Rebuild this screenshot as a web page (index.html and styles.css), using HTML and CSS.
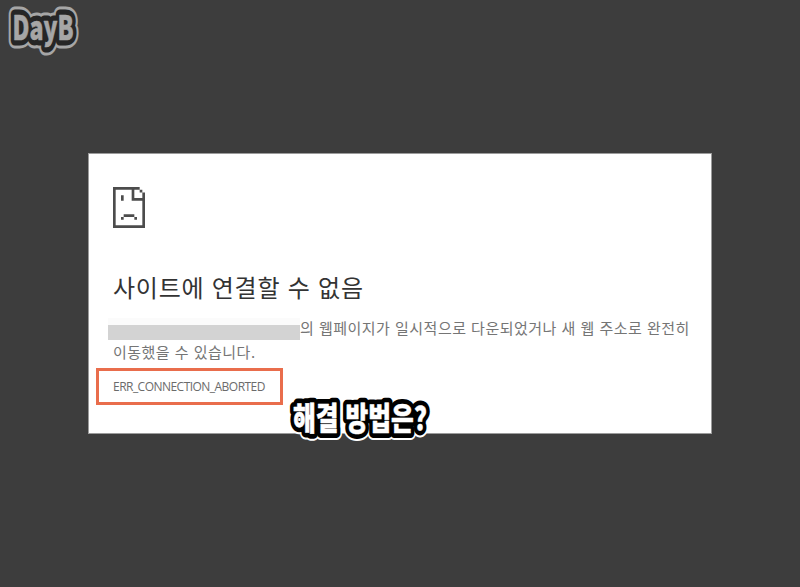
FILE: index.html
```html
<!DOCTYPE html>
<html lang="ko">

<head>
    <meta charset="UTF-8">
    <meta name="viewport" content="width=device-width, initial-scale=1.0">
    <title>사이트에 연결할 수 없음</title>
    <link rel="stylesheet" href="styles.css">
</head>

<body>
    <svg class="logo" width="130" height="70" viewBox="0 0 130 70">
        <g class="logo-text">
            <text class="logo-outer" x="12.5" y="40" textLength="61" lengthAdjust="spacingAndGlyphs">DayB</text>
            <text class="logo-inner" x="12.5" y="40" textLength="61" lengthAdjust="spacingAndGlyphs">DayB</text>
            <text class="logo-fill" x="12.5" y="40" textLength="61" lengthAdjust="spacingAndGlyphs">DayB</text>
        </g>
    </svg>

    <main class="card">
        <svg class="sad-icon" width="32" height="41" viewBox="0 0 12 15" preserveAspectRatio="none">
            <path d="M0 0H10V1H11V2H12V15H0ZM1 1V14H11V5H7V1ZM8 1V4H11V2H10V1Z" fill-rule="evenodd" />
            <path d="M3 3H4V5H3ZM4 10H8V11H4ZM3 11H4V12H3ZM8 11H9V12H8Z" />
        </svg>
        <h1>사이트에 연결할 수 없음</h1>
        <p class="message"><span class="masked"></span>의 웹페이지가 일시적으로 다운되었거나 새 웹 주소로 완전히<br>이동했을 수 있습니다.</p>
        <div class="error-code"><span>ERR_CONNECTION_ABORTED</span></div>

        <svg class="caption" width="220" height="70" viewBox="0 0 220 70">
            <g class="caption-text">
                <text class="caption-outer" x="13" y="41" textLength="134" lengthAdjust="spacingAndGlyphs">해결 방법은?</text>
                <text class="caption-inner" x="13" y="41" textLength="134" lengthAdjust="spacingAndGlyphs">해결 방법은?</text>
                <text class="caption-fill" x="13" y="41" textLength="134" lengthAdjust="spacingAndGlyphs">해결 방법은?</text>
            </g>
        </svg>
    </main>
</body>

</html>
```
FILE: styles.css
```css
body {
    margin: 0;
    height: 587px;
    overflow: hidden;
    position: relative;
    background-color: #3d3d3d;
    font-family: "Noto Sans CJK KR", sans-serif;
}

.logo {
    position: absolute;
    left: 0;
    top: 0;
}

.logo-text {
    font-family: "Noto Sans CJK KR", sans-serif;
    font-size: 34px;
    font-weight: 900;
    stroke-linejoin: round;
}

.logo-outer {
    fill: #a6a6a6;
    stroke: #a6a6a6;
    stroke-width: 17px;
}

.logo-inner {
    fill: #262626;
    stroke: #262626;
    stroke-width: 11px;
}

.logo-fill {
    fill: #a6a6a6;
    stroke: #a6a6a6;
    stroke-width: 0.6px;
}

.card {
    position: relative;
    box-sizing: border-box;
    width: 624px;
    height: 281px;
    margin: 153px 0 0 88px;
    padding: 33px 0 0 24px;
    border: 1px solid #9b9b9b;
    background-color: #fff;
    display: inline-block;
}

.sad-icon {
    display: block;
    fill: #4c4c4c;
}

h1 {
    margin: 39px 0 0;
    font-size: 24px;
    line-height: 40px;
    font-weight: 400;
    letter-spacing: 0.75px;
    color: #333;
}

.message {
    margin: 9px 0 0;
    font-size: 15px;
    line-height: 23px;
    letter-spacing: 0.48px;
    white-space: nowrap;
    color: #757575;
}

.masked {
    display: inline-block;
    box-sizing: border-box;
    width: 192px;
    height: 22px;
    margin: -7px 0 0 -5px;
    vertical-align: -6px;
    border-top: 7px solid #fbfbfb;
    background-color: #d3d3d3;
}

.error-code {
    box-sizing: border-box;
    width: 187px;
    height: 37px;
    margin: 5px 0 0 -17px;
    padding-left: 14px;
    border: 3px solid #e96d4c;
    font-family: "Open Sans", sans-serif;
    font-size: 12px;
    line-height: 31px;
    letter-spacing: -0.53px;
    color: #6b6b6b;
}

.caption {
    position: absolute;
    left: 191px;
    top: 235px;
}

.caption-text {
    font-family: "Noto Sans CJK KR", sans-serif;
    font-size: 32px;
    font-weight: 900;
    stroke-linejoin: round;
}

.caption-outer {
    fill: #fff;
    stroke: #fff;
    stroke-width: 14px;
}

.caption-inner {
    fill: #000;
    stroke: #000;
    stroke-width: 10px;
}

.caption-fill {
    fill: #fff;
    stroke: #fff;
    stroke-width: 0.5px;
}
```
